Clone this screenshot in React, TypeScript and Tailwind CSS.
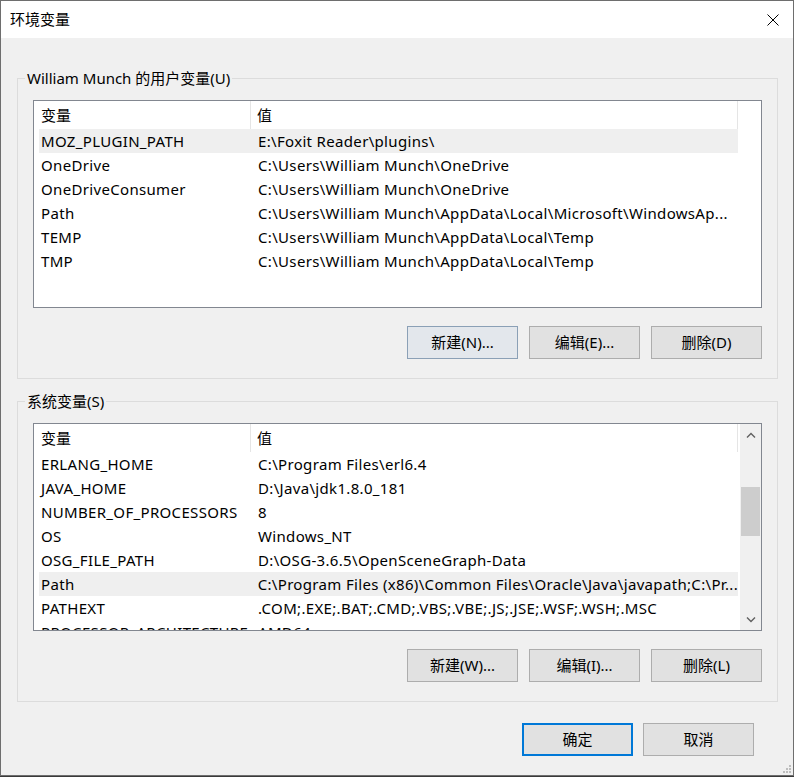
import React from 'react';

type Row = { name: string; value: string; selected?: boolean };

const USER_VARS: Row[] = [
  { name: 'MOZ_PLUGIN_PATH', value: 'E:\\Foxit Reader\\plugins\\', selected: true },
  { name: 'OneDrive', value: 'C:\\Users\\William Munch\\OneDrive' },
  { name: 'OneDriveConsumer', value: 'C:\\Users\\William Munch\\OneDrive' },
  { name: 'Path', value: 'C:\\Users\\William Munch\\AppData\\Local\\Microsoft\\WindowsAp...' },
  { name: 'TEMP', value: 'C:\\Users\\William Munch\\AppData\\Local\\Temp' },
  { name: 'TMP', value: 'C:\\Users\\William Munch\\AppData\\Local\\Temp' },
];

const SYSTEM_VARS: Row[] = [
  { name: 'ERLANG_HOME', value: 'C:\\Program Files\\erl6.4' },
  { name: 'JAVA_HOME', value: 'D:\\Java\\jdk1.8.0_181' },
  { name: 'NUMBER_OF_PROCESSORS', value: '8' },
  { name: 'OS', value: 'Windows_NT' },
  { name: 'OSG_FILE_PATH', value: 'D:\\OSG-3.6.5\\OpenSceneGraph-Data' },
  { name: 'Path', value: 'C:\\Program Files (x86)\\Common Files\\Oracle\\Java\\javapath;C:\\Pr...', selected: true },
  { name: 'PATHEXT', value: '.COM;.EXE;.BAT;.CMD;.VBS;.VBE;.JS;.JSE;.WSF;.WSH;.MSC' },
  { name: 'PROCESSOR_ARCHITECTURE', value: 'AMD64' },
];

const FONT = "font-['Segoe_UI','Noto_Sans','Noto_Sans_CJK_SC',sans-serif]";

function Chevron({ up }: { up?: boolean }) {
  return (
    <svg width="10" height="6" viewBox="0 0 10 6" className="block">
      <path d={up ? 'M1 5.5 L5 1.5 L9 5.5' : 'M1 0.5 L5 4.5 L9 0.5'} fill="none" stroke="#606060" strokeWidth="1.4" />
    </svg>
  );
}

function VarList({ rows, scroll }: { rows: Row[]; scroll?: boolean }) {
  return (
    <div className="relative h-[208px] w-[729px] overflow-hidden border border-[#828790] bg-white">
      <div className="flex h-[28px] w-[704px] items-center">
        <div className="flex h-full w-[217px] items-center border-r border-[#e5e5e5] pl-[7px]">变量</div>
        <div className="flex h-full flex-1 items-center border-r border-[#e5e5e5] pl-[6px]">值</div>
      </div>
      {rows.map((r) => (
        <div
          key={r.name}
          className={`ml-[5px] flex h-[24px] w-[699px] items-center whitespace-nowrap tracking-[0.33px] ${r.selected ? 'bg-[#efefef]' : ''}`}
        >
          <div className="w-[212px] pl-[2px]">{r.name}</div>
          <div className="flex-1 pl-[7px]">{r.value}</div>
        </div>
      ))}
      {scroll ? (
        <div className="absolute right-0 top-0 flex h-full w-[21px] flex-col items-center bg-[#f0f0f0]">
          <div className="flex h-[21px] w-full items-center justify-center">
            <Chevron up />
          </div>
          <div className="mt-[42px] h-[49px] w-[19px] bg-[#cdcdcd]" />
          <div className="flex-1" />
          <div className="flex h-[21px] w-full items-center justify-center">
            <Chevron />
          </div>
        </div>
      ) : null}
    </div>
  );
}

function Btn({ children, tone }: { children: React.ReactNode; tone?: 'hover' | 'default' }) {
  const cls =
    tone === 'hover'
      ? 'border border-[#8ba0b6] bg-[#e3e7ec]'
      : tone === 'default'
        ? 'border-2 border-[#0078d7] bg-[#e1e1e1]'
        : 'border border-[#adadad] bg-[#e1e1e1]';
  return (
    <button className={`flex h-[33px] w-[111px] items-center justify-center text-[15px] text-black ${cls}`}>
      {children}
    </button>
  );
}

function Group({ label, rows, buttons, scroll }: { label: string; rows: Row[]; buttons: string[]; scroll?: boolean }) {
  return (
    <div className="relative h-[301px] w-[761px] border border-[#dcdcdc] px-[15px] pt-[21px]">
      <span className="absolute left-[7px] top-[-11px] bg-[#f0f0f0] px-[2px] leading-[20px]">{label}</span>
      <VarList rows={rows} scroll={scroll} />
      <div className="mt-[18px] flex justify-end gap-[11px]">
        {buttons.map((b, i) => (
          <Btn key={b} tone={i === 0 && !scroll ? 'hover' : undefined}>
            {b}
          </Btn>
        ))}
      </div>
    </div>
  );
}

export default function App() {
  return (
    <div className={`h-[777px] w-[794px] bg-[#3a3a3a] text-[15px] text-black ${FONT}`}>
      <div className="flex h-[776px] w-[794px] flex-col border border-[#6e6e6e] bg-[#f0f0f0]">
        <div className="flex h-[37px] shrink-0 items-center justify-between bg-white pl-[9px] pr-[14px]">
          <span>环境变量</span>
          <svg width="12" height="12" viewBox="0 0 12 12">
            <path d="M0.5 0.5 L11.5 11.5 M11.5 0.5 L0.5 11.5" stroke="#000" strokeWidth="1" />
          </svg>
        </div>
        <div className="relative flex flex-1 flex-col px-[16px] pt-[40px]">
          <Group label="William Munch 的用户变量(U)" rows={USER_VARS} buttons={['新建(N)...', '编辑(E)...', '删除(D)']} />
          <div className="mt-[22px]">
            <Group label="系统变量(S)" rows={SYSTEM_VARS} buttons={['新建(W)...', '编辑(I)...', '删除(L)']} scroll />
          </div>
          <div className="mt-[21px] flex justify-end gap-[10px] pr-[23px]">
            <Btn tone="default">确定</Btn>
            <Btn>取消</Btn>
          </div>
          <div className="absolute bottom-[2px] right-[2px] grid grid-cols-3 gap-[1px]">
            {[0, 0, 1, 0, 1, 1, 1, 1, 1].map((v, i) => (
              <div key={i} className={`h-[2px] w-[2px] ${v ? 'bg-[#bdbdbd]' : ''}`} />
            ))}
          </div>
        </div>
      </div>
    </div>
  );
}
